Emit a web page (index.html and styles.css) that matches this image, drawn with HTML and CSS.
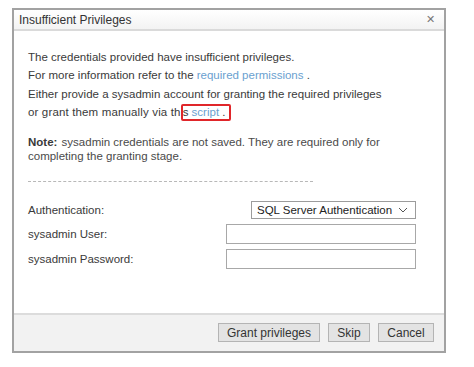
FILE: index.html
```html
<!DOCTYPE html>
<html lang="en">
<head>
    <meta charset="UTF-8">
    <meta name="viewport" content="width=device-width, initial-scale=1.0">
    <title>Insufficient Privileges</title>
    <link rel="stylesheet" href="styles.css">
</head>
<body>
    <div class="dialog">
        <div class="title-bar">
            <span class="title">Insufficient Privileges</span>
            <span class="close">&#x2715;</span>
        </div>
        <div class="dialog-body">
            <p class="intro">
                The credentials provided have insufficient privileges.<br>
                For more information refer to the <a href="#" class="link">required permissions</a> .<br>
                Either provide a sysadmin account for granting the required privileges<br>
                <span class="wide">or grant them manually via th</span><span class="marked">s <a href="#" class="link">script</a> .</span>
            </p>
            <p class="note"><b>Note:</b> sysadmin credentials are not saved. They are required only for completing the granting stage.</p>
            <div class="separator"></div>
            <form class="cred-form">
                <div class="form-row">
                    <label for="auth">Authentication:</label>
                    <div class="select-box" id="auth">
                        <span>SQL Server Authentication</span>
                        <svg width="10" height="6" viewBox="0 0 10 6"><path d="M1 1 L5 5 L9 1" fill="none" stroke="#555" stroke-width="1"/></svg>
                    </div>
                </div>
                <div class="form-row">
                    <label for="user">sysadmin User:</label>
                    <input type="text" id="user" class="text-input">
                </div>
                <div class="form-row">
                    <label for="pass">sysadmin Password:</label>
                    <input type="password" id="pass" class="text-input">
                </div>
            </form>
        </div>
        <div class="footer">
            <button class="btn btn-grant">Grant privileges</button>
            <button class="btn">Skip</button>
            <button class="btn btn-cancel">Cancel</button>
        </div>
    </div>
</body>
</html>
```

FILE: styles.css
```css
* {
    margin: 0;
    padding: 0;
    box-sizing: border-box;
}

body {
    font-family: "Liberation Sans", Arial, sans-serif;
    font-size: 11.5px;
    color: #3a3a3a;
    background-color: #fff;
    padding: 8px 0 0 12px;
}

.dialog {
    width: 434px;
    height: 345px;
    border: 2px solid #a2a2a2;
    display: flex;
    flex-direction: column;
    background-color: #fff;
}

.title-bar {
    height: 21px;
    display: flex;
    align-items: center;
    justify-content: space-between;
    padding: 0 9px 0 5px;
    background: linear-gradient(#ffffff, #f3f3f3);
    border-bottom: 2px solid #dadada;
}

.title {
    font-size: 12px;
    color: #333;
}

.close {
    font-size: 11px;
    color: #777;
}

.dialog-body {
    flex: 1;
    padding: 17px 28px 0 14px;
}

.intro {
    line-height: 18.4px;
}

.wide {
    letter-spacing: 0.15px;
}

.link {
    color: #6a9fd0;
    text-decoration: none;
}

.marked {
    border: 2px solid #e0262a;
    border-radius: 2px;
    padding: 0 4px 1px 0;
}

.note {
    margin-top: 13px;
    line-height: 14px;
    width: 370px;
    color: #4a4a4a;
}

.note b {
    color: #3a3a3a;
    margin-right: 1px;
}

.separator {
    margin-top: 18px;
    width: 285px;
    border-top: 1px dashed #b8b8b8;
}

.cred-form {
    margin-top: 19px;
    display: flex;
    flex-direction: column;
    gap: 5px;
}

.form-row {
    display: flex;
    justify-content: space-between;
    align-items: center;
}

.select-box {
    width: 165px;
    height: 18px;
    border: 1px solid #9c9c9c;
    display: flex;
    align-items: center;
    justify-content: space-between;
    padding: 0 7px 0 5px;
    font-size: 11.5px;
    color: #222;
}

.text-input {
    width: 190px;
    height: 20px;
    border: 1px solid #a8a8a8;
    background-color: #fff;
}

.footer {
    height: 38px;
    background-color: #f2f2f2;
    border-top: 2px solid #dcdcdc;
    display: flex;
    justify-content: flex-end;
    align-items: flex-start;
    gap: 8px;
    padding: 8px 10px 0 0;
}

.btn {
    height: 19px;
    font-family: "Liberation Sans", Arial, sans-serif;
    font-size: 12px;
    color: #333;
    background-color: #e3e3e3;
    border: 1px solid #b4b4b4;
    width: 42px;
}

.btn-grant {
    width: 102px;
}

.btn-cancel {
    width: 56px;
}
```
